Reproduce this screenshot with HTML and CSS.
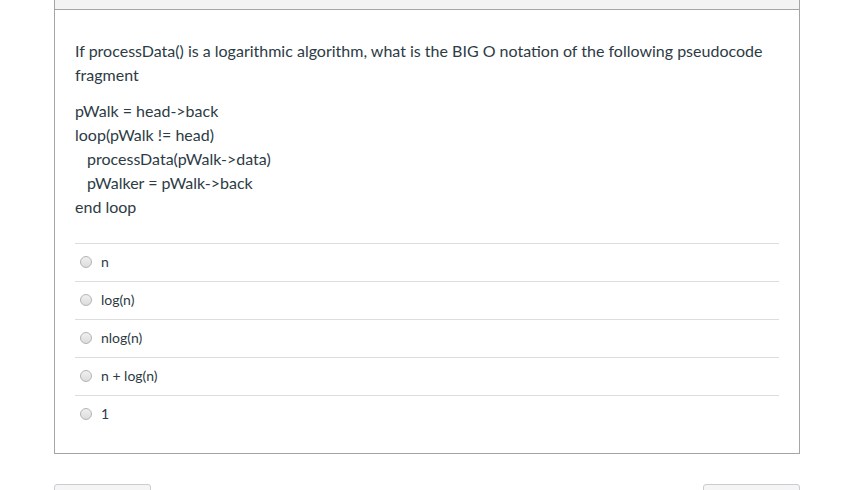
FILE: index.html
```html
<!DOCTYPE html>
<html>
<head>
<meta charset="utf-8">
<link rel="stylesheet" href="styles.css">
</head>
<body>
<div class="card">
  <div class="card-header"></div>
  <div class="card-body">
    <p class="q">If processData() is a logarithmic algorithm, what is the BIG O notation of the following pseudocode fragment</p>
    <div class="code">
      <div>pWalk = head-&gt;back</div>
      <div>loop(pWalk != head)</div>
      <div class="ind">processData(pWalk-&gt;data)</div>
      <div class="ind">pWalker = pWalk-&gt;back</div>
      <div>end loop</div>
    </div>
    <div class="answers">
      <label class="answer"><span class="radio"></span><span class="atext">n</span></label>
      <label class="answer"><span class="radio"></span><span class="atext">log(n)</span></label>
      <label class="answer"><span class="radio"></span><span class="atext">nlog(n)</span></label>
      <label class="answer"><span class="radio"></span><span class="atext">n + log(n)</span></label>
      <label class="answer"><span class="radio"></span><span class="atext">1</span></label>
    </div>
  </div>
</div>
<div class="nav">
  <div class="btn"></div>
  <div class="btn"></div>
</div>
</body>
</html>
```
FILE: styles.css
```css
html, body {
  margin: 0;
  padding: 0;
  background: #fff;
  overflow: hidden;
}
body {
  font-family: Lato, "Open Sans", sans-serif;
  font-size: 16px;
  color: #2d3b45;
  line-height: 24px;
}
.card {
  margin-left: 54px;
  width: 746px;
  box-sizing: border-box;
  border: 1px solid #a5a5a5;
  border-top: none;
}
.card-header {
  height: 9px;
  background: #f3f3f3;
  border-bottom: 1px solid #a5a5a5;
}
.card-body {
  padding: 29px 20px 20px 20px;
}
.q {
  margin: 0 0 12px 0;
}
.code {
  margin-bottom: 24px;
}
.ind {
  padding-left: 12px;
}
.answer {
  display: flex;
  align-items: center;
  height: 37px;
  border-top: 1px solid #dddddd;
  font-size: 14px;
}
.atext {
  margin-top: -2px;
}
.radio {
  width: 10px;
  height: 10px;
  border-radius: 50%;
  border: 1px solid #b4b4b4;
  background: linear-gradient(#f0f0f0, #dcdcdc);
  margin-left: 5px;
  margin-right: 9px;
  margin-top: -1px;
}
.nav {
  display: flex;
  justify-content: space-between;
  width: 746px;
  margin-left: 54px;
  margin-top: 30px;
}
.btn {
  width: 95px;
  height: 30px;
  border: 1px solid #c7cdd1;
  border-radius: 3px;
  background: #f5f5f5;
}
```
